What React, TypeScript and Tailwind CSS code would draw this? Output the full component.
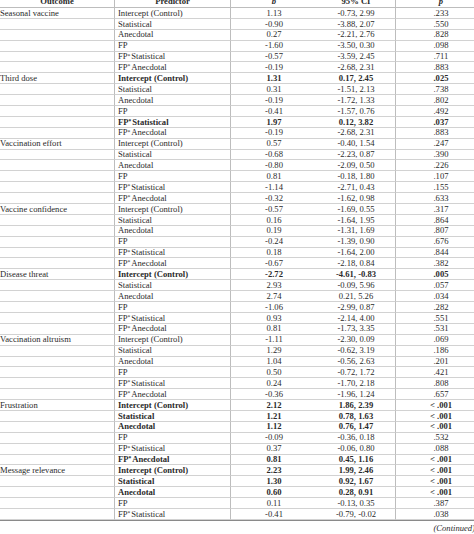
type Row = [string, string, string, boolean?]

const groups: { outcome: string; rows: Row[] }[] = [
  {
    outcome: "Seasonal vaccine",
    rows: [
      ["1.13", "-0.73, 2.99", ".233"],
      ["-0.90", "-3.88, 2.07", ".550"],
      ["0.27", "-2.21, 2.76", ".828"],
      ["-1.60", "-3.50, 0.30", ".098"],
      ["-0.57", "-3.59, 2.45", ".711"],
      ["-0.19", "-2.68, 2.31", ".883"],
    ],
  },
  {
    outcome: "Third dose",
    rows: [
      ["1.31", "0.17, 2.45", ".025", true],
      ["0.31", "-1.51, 2.13", ".738"],
      ["-0.19", "-1.72, 1.33", ".802"],
      ["-0.41", "-1.57, 0.76", ".492"],
      ["1.97", "0.12, 3.82", ".037", true],
      ["-0.19", "-2.68, 2.31", ".883"],
    ],
  },
  {
    outcome: "Vaccination effort",
    rows: [
      ["0.57", "-0.40, 1.54", ".247"],
      ["-0.68", "-2.23, 0.87", ".390"],
      ["-0.80", "-2.09, 0.50", ".226"],
      ["0.81", "-0.18, 1.80", ".107"],
      ["-1.14", "-2.71, 0.43", ".155"],
      ["-0.32", "-1.62, 0.98", ".633"],
    ],
  },
  {
    outcome: "Vaccine confidence",
    rows: [
      ["-0.57", "-1.69, 0.55", ".317"],
      ["0.16", "-1.64, 1.95", ".864"],
      ["0.19", "-1.31, 1.69", ".807"],
      ["-0.24", "-1.39, 0.90", ".676"],
      ["0.18", "-1.64, 2.00", ".844"],
      ["-0.67", "-2.18, 0.84", ".382"],
    ],
  },
  {
    outcome: "Disease threat",
    rows: [
      ["-2.72", "-4.61, -0.83", ".005", true],
      ["2.93", "-0.09, 5.96", ".057"],
      ["2.74", "0.21, 5.26", ".034"],
      ["-1.06", "-2.99, 0.87", ".282"],
      ["0.93", "-2.14, 4.00", ".551"],
      ["0.81", "-1.73, 3.35", ".531"],
    ],
  },
  {
    outcome: "Vaccination altruism",
    rows: [
      ["-1.11", "-2.30, 0.09", ".069"],
      ["1.29", "-0.62, 3.19", ".186"],
      ["1.04", "-0.56, 2.63", ".201"],
      ["0.50", "-0.72, 1.72", ".421"],
      ["0.24", "-1.70, 2.18", ".808"],
      ["-0.36", "-1.96, 1.24", ".657"],
    ],
  },
  {
    outcome: "Frustration",
    rows: [
      ["2.12", "1.86, 2.39", "< .001", true],
      ["1.21", "0.78, 1.63", "< .001", true],
      ["1.12", "0.76, 1.47", "< .001", true],
      ["-0.09", "-0.36, 0.18", ".532"],
      ["0.37", "-0.06, 0.80", ".088"],
      ["0.81", "0.45, 1.16", "< .001", true],
    ],
  },
  {
    outcome: "Message relevance",
    rows: [
      ["2.23", "1.99, 2.46", "< .001", true],
      ["1.30", "0.92, 1.67", "< .001", true],
      ["0.60", "0.28, 0.91", "< .001", true],
      ["0.11", "-0.13, 0.35", ".387"],
      ["-0.41", "-0.79, -0.02", ".038"],
    ],
  },
]

const predictors = [
  "Intercept (Control)",
  "Statistical",
  "Anecdotal",
  "FP",
  "FP*Statistical",
  "FP*Anecdotal",
]

function Predictor({ name }: { name: string }) {
  if (name.startsWith("FP*")) {
    return (
      <>
        FP<sup className="text-[5.5px] relative -top-[1px] mr-[1px]">*</sup>
        {name.slice(3)}
      </>
    )
  }
  return <>{name}</>
}

export default function App() {
  const cell = "h-[10.9px] flex items-center border-b border-[#d2d2d2]"
  const head = "h-[8px] overflow-hidden flex items-end justify-center font-bold border-b border-[#bdbdbd] pb-[1px]"
  return (
    <div
      className="w-[474px] h-[534px] overflow-hidden bg-white text-[#2a2a2a] text-[8.6px] leading-none"
      style={{ fontFamily: '"Liberation Serif", "Times New Roman", serif' }}
    >
      <div className="w-[486px]">
        <div className="grid grid-cols-[115px_116px_86px_79px_90px]">
          {/* header, top is cut off in the shot */}
          <div className={`${head} border-r`}>Outcome</div>
          <div className={`${head} border-r`}>Predictor</div>
          <div className={`${head} italic`}>b</div>
          <div className={`${head} border-r`}>95% CI</div>
          <div className={`${head} italic`}>p</div>

          {groups.map((g) =>
            g.rows.map((r, i) => {
              const [b, ci, p, bold] = r
              const w = bold ? "font-bold" : ""
              return (
                <div key={g.outcome + i} className="contents">
                  <div className={`${cell} border-r border-r-[#bdbdbd] whitespace-nowrap`}>
                    {i === 0 ? g.outcome : ""}
                  </div>
                  <div className={`${cell} border-r border-r-[#bdbdbd] pl-[3px] whitespace-nowrap ${w}`}>
                    <Predictor name={predictors[i]} />
                  </div>
                  <div className={`${cell} justify-center ${w}`}>{b}</div>
                  <div className={`${cell} justify-center border-r border-r-[#bdbdbd] whitespace-nowrap ${w}`}>{ci}</div>
                  <div className={`${cell} justify-center whitespace-nowrap ${w}`}>{p}</div>
                </div>
              )
            })
          )}
        </div>
        <div className="border-t border-[#8a8a8a] flex justify-end pr-[11px] pt-[3px] italic">
          (Continued)
        </div>
      </div>
    </div>
  )
}
